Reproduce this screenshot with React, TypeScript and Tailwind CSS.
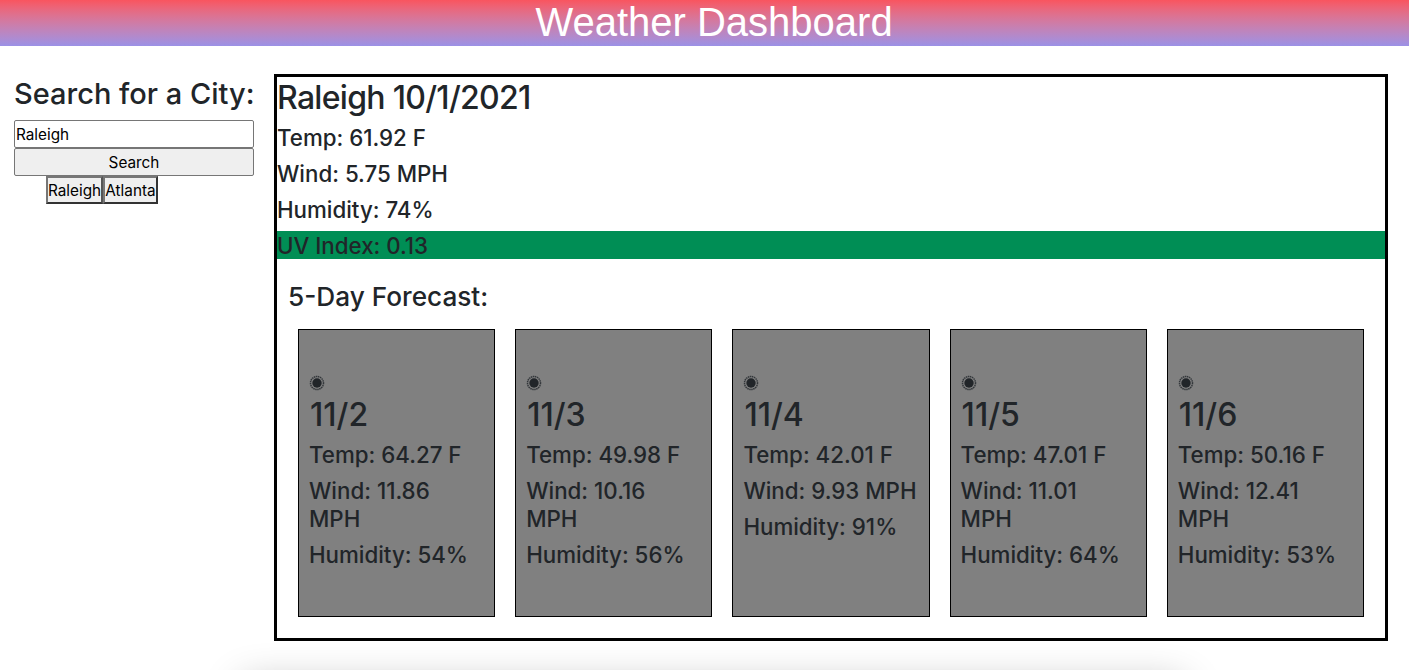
const days = [
  { d: "11/2", t: "64.27", w: "11.86", h: "54" },
  { d: "11/3", t: "49.98", w: "10.16", h: "56" },
  { d: "11/4", t: "42.01", w: "9.93", h: "91" },
  { d: "11/5", t: "47.01", w: "11.01", h: "64" },
  { d: "11/6", t: "50.16", w: "12.41", h: "53" },
];

function Sun() {
  return (
    <svg width="16" height="16" viewBox="0 0 16 16" className="block">
      <circle cx="8" cy="8" r="6.5" fill="none" stroke="#33373b" strokeWidth="1.5" strokeDasharray="1.5 0.55" />
      <circle cx="8" cy="8" r="4.7" fill="#212529" />
    </svg>
  );
}

export default function App() {
  return (
    <div className="relative h-[670px] overflow-hidden bg-white text-[#212529] font-['Inter','Liberation_Sans',sans-serif] font-[450]">
      <header className="h-[46px] bg-gradient-to-b from-[#f9545f] to-[#9b91e6] text-center text-white text-[40px] leading-[44px] font-normal font-['Liberation_Sans',sans-serif] pl-[19px]">
        Weather Dashboard
      </header>
      <div className="flex items-start pl-[14px] pt-[28px]">
        <aside className="w-[240px] shrink-0">
          <h2 className="text-[29px] leading-[40px] font-[450] whitespace-nowrap mb-[6px]">Search for a City:</h2>
          <input readOnly value="Raleigh" className="block w-full h-[28px] border border-[#767676] rounded-[2px] px-[1px] text-[15.3px] font-normal text-black bg-white outline-none" />
          <button className="block w-full h-[28px] border border-[#767676] rounded-[2px] bg-[#efefef] text-[15.3px] leading-[28px] font-normal text-black">Search</button>
          <div className="flex pl-[32px]">
            <button className="h-[28px] w-[57px] border-2 border-t-[#767676] border-l-[#767676] border-r-[#555] border-b-[#333] bg-[#efefef] text-[15.3px] leading-[26px] font-normal text-black whitespace-nowrap">Raleigh</button>
            <button className="h-[28px] w-[55px] border-2 border-t-[#767676] border-l-[#767676] border-r-[#333] border-b-[#333] bg-[#efefef] text-[15.3px] leading-[26px] font-normal text-black whitespace-nowrap">Atlanta</button>
          </div>
        </aside>
        <main className="ml-[20px] w-[1114px] h-[567px] border-[3px] border-black">
          <h2 className="text-[32px] leading-[38px] font-[450] tracking-[-0.7px] pt-[2px] mb-[6px]">Raleigh 10/1/2021</h2>
          <p className="text-[22.3px] h-[28px] leading-[30px] mb-[8px]">Temp: 61.92 F</p>
          <p className="text-[22.3px] h-[28px] leading-[30px] mb-[8px]">Wind: 5.75 MPH</p>
          <p className="text-[22.3px] h-[28px] leading-[30px] mb-[8px]">Humidity: 74%</p>
          <p className="text-[22.3px] h-[28px] leading-[30px] bg-[#008e55]">UV Index: 0.13</p>
          <h3 className="text-[26.2px] leading-[29px] font-[450] pl-[11px] mt-[23px]">5-Day Forecast:</h3>
          <div className="grid grid-cols-5 gap-[20px] px-[21px] mt-[18px]">
            {days.map((x) => (
              <div key={x.d} className="h-[288px] border border-black bg-[#808080] pl-[10px] pr-[12px] pt-[45px]">
                <Sun />
                <div className="text-[32px] leading-[38px] mt-[5px] mb-[6px] pl-[1px]">{x.d}</div>
                <p className="text-[22.3px] leading-[28px] pt-[1px] mb-[7px]">Temp: {x.t} F</p>
                <p className="text-[22.3px] leading-[28px] pt-[1px] mb-[7px]">Wind: {x.w} MPH</p>
                <p className="text-[22.3px] leading-[28px] pt-[1px]">Humidity: {x.h}%</p>
              </div>
            ))}
          </div>
        </main>
      </div>
      <div className="absolute left-[243px] top-[685px] w-[940px] h-[40px] shadow-[0_0_40px_rgba(0,0,0,0.3)]" />
    </div>
  );
}
